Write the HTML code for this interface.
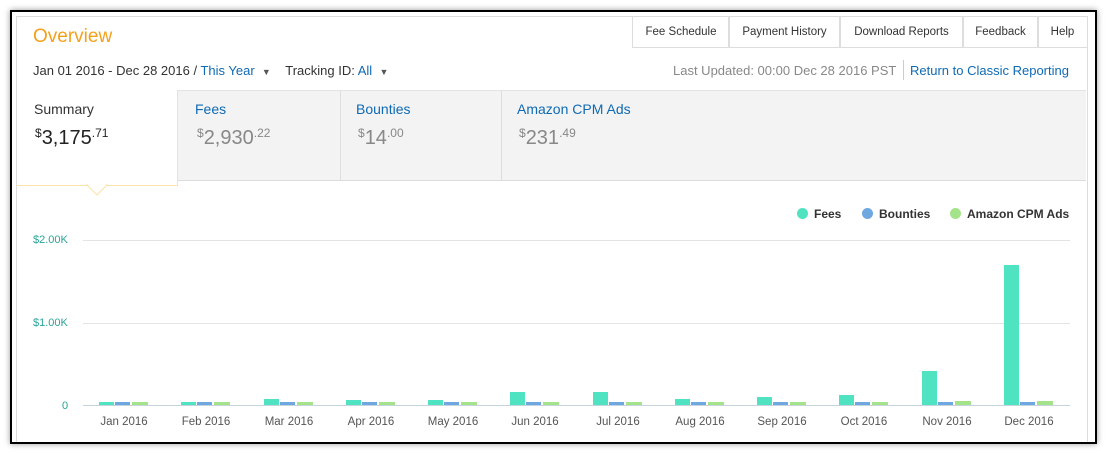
<!DOCTYPE html><html><head><style>
body{margin:0;width:1106px;height:453px;background:#fff;position:relative;overflow:hidden;font-family:"Liberation Sans",Arial,sans-serif}
.a{position:absolute}
.frame{left:10px;top:10px;width:1083px;height:430px;border:2px solid #000;box-shadow:0 0 6px rgba(0,0,0,.4);z-index:5}
.panel{left:16px;top:16px;width:1070px;height:426px;border:1px solid #ddd;background:#fff}
.t{font-size:13px;color:#333;white-space:nowrap}
.blue{color:#0f6ab4}
.nav{top:17px;height:30px;border:1px solid #ddd;border-top:none;font-size:11.5px;color:#333;line-height:30px;text-align:center}
.cur{font-size:20px;color:#888}
.cur sup{font-size:12px;vertical-align:7px}
.leg{top:207px;font-size:12px;font-weight:bold;color:#333;white-space:nowrap}
.dot{display:inline-block;width:11px;height:11px;border-radius:50%;vertical-align:-1px;margin-right:6px}
</style></head><body>
<div class="a frame"></div>
<div class="a panel"></div>
<div class="a" style="left:33px;top:26px;font-size:19px;color:#f4a01c">Overview</div>
<div class="a nav" style="left:632px;width:96px">Fee Schedule</div>
<div class="a nav" style="left:728px;width:111px">Payment History</div>
<div class="a nav" style="left:839px;width:123px">Download Reports</div>
<div class="a nav" style="left:962px;width:75px">Feedback</div>
<div class="a nav" style="left:1037px;width:49px;border-right:none">Help</div>
<div class="a t" style="left:33px;top:63px">Jan 01 2016 - Dec 28 2016 / <span class="blue">This Year</span> &nbsp;<span style="font-size:9px;color:#555">▼</span> &nbsp;&nbsp;&nbsp;Tracking ID: <span class="blue">All</span> &nbsp;<span style="font-size:9px;color:#555">▼</span></div>
<div class="a t" style="left:673px;top:63px;color:#888">Last Updated: 00:00 Dec 28 2016 PST</div>
<div class="a" style="left:903px;top:60px;width:1px;height:20px;background:#ccc"></div>
<div class="a t blue" style="left:910px;top:63px">Return to Classic Reporting</div>
<div class="a" style="left:178px;top:90px;width:908px;height:89px;background:#f3f3f3;border-top:1px solid #e3e3e3;border-bottom:1px solid #ddd"></div>
<div class="a" style="left:340px;top:91px;width:1px;height:89px;background:#ddd"></div>
<div class="a" style="left:501px;top:91px;width:1px;height:89px;background:#ddd"></div>
<div class="a" style="left:17px;top:90px;width:160px;height:95px;background:#fff;border-right:1px solid #fbe2a8;border-bottom:1px solid #fbe2a8"></div>
<svg class="a" style="left:86px;top:184px" width="24" height="14"><polygon points="1,1 11,11 21,1" fill="#fff" stroke="#fbe2a8"/><rect x="2" y="0" width="18" height="1.5" fill="#fff"/></svg>
<div class="a" style="left:34px;top:101px;font-size:14px;color:#333">Summary</div>
<div class="a cur" style="left:35px;top:126px;color:#222"><sup>$</sup>3,175<sup>.71</sup></div>
<div class="a blue" style="left:195px;top:101px;font-size:14px">Fees</div>
<div class="a cur" style="left:197px;top:126px"><sup>$</sup>2,930<sup>.22</sup></div>
<div class="a blue" style="left:356px;top:101px;font-size:14px">Bounties</div>
<div class="a cur" style="left:358px;top:126px"><sup>$</sup>14<sup>.00</sup></div>
<div class="a blue" style="left:517px;top:101px;font-size:14px">Amazon CPM Ads</div>
<div class="a cur" style="left:519px;top:126px"><sup>$</sup>231<sup>.49</sup></div>
<div class="a leg" style="left:797px"><span class="dot" style="background:#50e3c2"></span>Fees</div>
<div class="a leg" style="left:862px"><span class="dot" style="background:#6fa8e0"></span>Bounties</div>
<div class="a leg" style="left:950px"><span class="dot" style="background:#a4e38a"></span>Amazon CPM Ads</div>
<div class="a" style="left:33px;top:234px;font-size:11px;color:#2aa398">$2.00K</div>
<div class="a" style="left:33px;top:317px;font-size:11px;color:#2aa398">$1.00K</div>
<div class="a" style="left:62px;top:400px;font-size:11px;color:#2aa398">0</div>
<div class="a" style="left:83px;top:240px;width:987px;height:1px;background:#e3e3e3"></div>
<div class="a" style="left:83px;top:323px;width:987px;height:1px;background:#e3e3e3"></div>
<div class="a" style="left:83px;top:405px;width:987px;height:1px;background:#c5d3dc"></div>
<svg class="a" style="left:0;top:0" width="1106" height="453" id="s"></svg>
<script>
var f=[3,3,6,5,5,13,13,6,8,10,34,140],b=[3,3,3,3,3,3,3,3,3,3,3,3],g=[3,3,3,3,3,3,3,3,3,3,4,4];
var m=["Jan","Feb","Mar","Apr","May","Jun","Jul","Aug","Sep","Oct","Nov","Dec"],h="";
for(var i=0;i<12;i++){var c=Math.round(83+(i+.5)*82.25);
h+='<rect x="'+(c-25)+'" y="'+(405-f[i])+'" width="15" height="'+f[i]+'" fill="#50e3c2"/>';
h+='<rect x="'+(c-9)+'" y="'+(405-b[i])+'" width="15" height="'+b[i]+'" fill="#6fa8e0"/>';
h+='<rect x="'+(c+8)+'" y="'+(405-g[i])+'" width="16" height="'+g[i]+'" fill="#a4e38a"/>';
h+='<text x="'+c+'" y="425" font-size="11.5" fill="#555" text-anchor="middle" font-family="Liberation Sans">'+m[i]+' 2016</text>';}
document.getElementById("s").innerHTML=h;
</script>
</body></html>
